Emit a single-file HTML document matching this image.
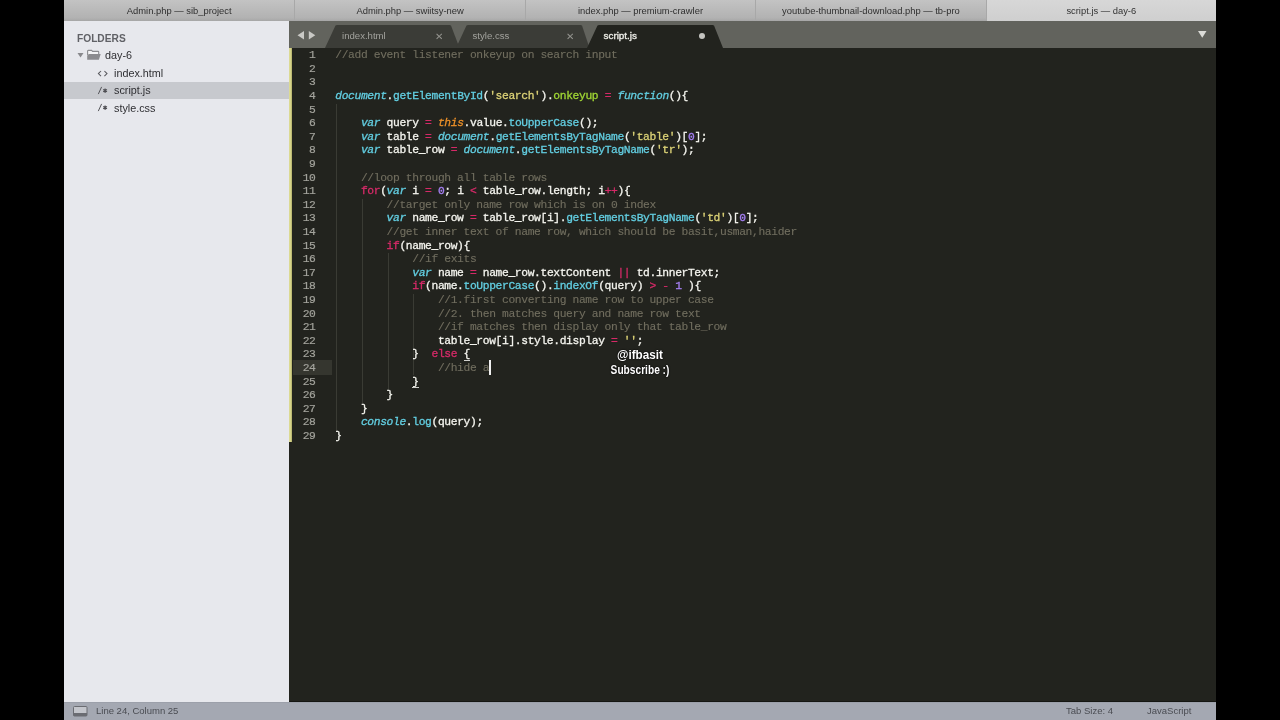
<!DOCTYPE html>
<html><head><meta charset="utf-8"><style>
*{margin:0;padding:0;box-sizing:border-box}
html,body{width:1280px;height:720px;overflow:hidden;background:#000}
body{position:relative;font-family:"Liberation Sans",sans-serif}
#wrap{position:absolute;left:0;top:0;width:1280px;height:720px;will-change:transform}
.abs{position:absolute}
#title{position:absolute;left:64px;top:0;width:1152px;height:21px;background:linear-gradient(#c3c3c3,#b2b2b2 85%,#a6a6a6)}
.tt{position:absolute;top:0;height:21px;line-height:21.4px;text-align:center;font-size:9.4px;color:#2f2f2f;border-left:1px solid #a8a8a8;white-space:pre}
.tt.first{border-left:none}
.tt.act{background:linear-gradient(#d7d7d7,#cfcfcf);color:#333}
#side{position:absolute;left:64px;top:21px;width:225px;height:681px;background:#e7e8ed}
#editor{position:absolute;left:289px;top:21px;width:927px;height:681px;background:#22231e;border-bottom:1px solid #151612}
#tabbar{position:absolute;left:289px;top:21px;width:927px;height:27px;background:#62635d}
#status{position:absolute;left:64px;top:702px;width:1152px;height:18px;background:#a4a8b2;border-top:1px solid #9ca0aa}
.ln{position:absolute;left:335.3px;height:13.6px;line-height:13.6px;font-family:"Liberation Mono",monospace;font-size:11.3px;letter-spacing:-0.368px;white-space:pre;color:#f8f8f2;-webkit-text-stroke:0.3px;z-index:3}
.num{position:absolute;left:291px;width:24.5px;text-align:right;height:13.6px;line-height:13.6px;font-family:"Liberation Mono",monospace;font-size:11.3px;letter-spacing:-0.368px;color:#a3a39c;-webkit-text-stroke:0.2px;z-index:3}
.guide{position:absolute;width:1px;background:#3a3b34;z-index:2}
.st{position:absolute;font-size:10.8px;color:#2f2f33;white-space:pre;line-height:12px}
.tabt{position:absolute;top:30px;font-size:9.6px;line-height:12px;color:#a2a29d;white-space:pre;z-index:5}
.x{position:absolute;top:31px;font-size:10px;line-height:12px;color:#94948f;z-index:5}
.sb{position:absolute;top:704.8px;font-size:9.5px;line-height:12px;color:#4a4c52;white-space:pre}
</style></head><body><div id="wrap">
<div id="title">
<div class="tt first" style="left:0.0px;width:230.4px">Admin.php — sib_project</div>
<div class="tt" style="left:230.4px;width:230.4px">Admin.php — swiitsy-new</div>
<div class="tt" style="left:460.8px;width:230.4px">index.php — premium-crawler</div>
<div class="tt" style="left:691.2px;width:230.4px">youtube-thumbnail-download.php — tb-pro</div>
<div class="tt act" style="left:921.6px;width:230.4px">script.js — day-6</div>
</div>
<div id="side"></div>
<div class="abs" style="left:64px;top:82px;width:225px;height:17px;background:#c7c9ce"></div>
<div class="st" style="left:77px;top:33.2px;font-weight:bold;font-size:10.2px;color:#606166">FOLDERS</div>
<svg class="abs" style="left:76.6px;top:51.6px" width="8" height="7" viewBox="0 0 8 7"><path d="M0.5 1 L6.5 1 L3.5 5.5 Z" fill="#88888c"/></svg>
<svg class="abs" style="left:86px;top:49px" width="16" height="12" viewBox="0 0 16 12"><path d="M1.6 6 L1.6 2.0 Q1.6 1.4 2.2 1.4 L5.6 1.4 L6.6 2.4 L12.1 2.4 Q12.7 2.4 12.7 3.0 L12.7 5.5" fill="#f3f3f5" stroke="#8c8c90" stroke-width="1.1"/><path d="M2.9 5.0 L14.7 5.0 L12.9 10.8 L1.2 10.8 L1.2 6.6 Z" fill="#8b8b8f"/></svg>
<div class="st" style="left:105px;top:48.8px">day-6</div>
<svg class="abs" style="left:97px;top:69.7px" width="12" height="8" viewBox="0 0 12 8"><path d="M4 1 L1.4 3.55 L4 6.1 M7.4 1 L10 3.55 L7.4 6.1" fill="none" stroke="#58585d" stroke-width="1.05"/></svg>
<div class="st" style="left:114px;top:66.6px">index.html</div>
<svg class="abs" style="left:97px;top:85.5px" width="12" height="10" viewBox="0 0 12 10"><path d="M1.3 8.1 L4.6 0.9" fill="none" stroke="#56565b" stroke-width="1"/><path d="M8.1 2.5 L8.1 6.9 M6.2 3.6 L10 5.8 M6.2 5.8 L10 3.6" fill="none" stroke="#4e4e53" stroke-width="1.1"/></svg>
<div class="st" style="left:114px;top:84px">script.js</div>
<svg class="abs" style="left:97px;top:102.9px" width="12" height="10" viewBox="0 0 12 10"><path d="M1.3 8.1 L4.6 0.9" fill="none" stroke="#56565b" stroke-width="1"/><path d="M8.1 2.5 L8.1 6.9 M6.2 3.6 L10 5.8 M6.2 5.8 L10 3.6" fill="none" stroke="#4e4e53" stroke-width="1.1"/></svg>
<div class="st" style="left:114px;top:101.5px">style.css</div>
<div id="editor"></div>
<div id="tabbar"></div>
<svg class="abs" style="left:296px;top:29.6px;z-index:5" width="22" height="11" viewBox="0 0 22 11"><path d="M1.5 5.2 L8 1 L8 9.5 Z" fill="#c9c9c5"/><path d="M12.8 1 L19.3 5.2 L12.8 9.5 Z" fill="#c9c9c5"/></svg>
<div class="abs" style="left:325px;top:25px;width:134.5px;height:23px;background:#3b3c37;clip-path:polygon(0px 23px, 10.5px 0.5px, 12px 0px, 124.5px 0px, 126.0px 0.5px, 134.5px 23px);z-index:3"></div>
<div class="abs" style="left:456px;top:25px;width:133.5px;height:23px;background:#3b3c37;clip-path:polygon(0px 23px, 10.5px 0.5px, 12px 0px, 124.5px 0px, 126.0px 0.5px, 133.5px 23px);z-index:3"></div>
<div class="abs" style="left:587px;top:25px;width:136px;height:23px;background:#22231e;clip-path:polygon(0px 23px, 10.5px 0.5px, 12px 0px, 125.5px 0px, 127.0px 0.5px, 136px 23px);z-index:4"></div>
<div class="tabt" style="left:342px">index.html</div>
<div class="x" style="left:435.4px">&#x2715;</div>
<div class="tabt" style="left:472.5px">style.css</div>
<div class="x" style="left:566px">&#x2715;</div>
<div class="tabt" style="left:603.5px;top:29.5px;color:#ececE6;font-size:9.9px;-webkit-text-stroke:0.35px #ececE6">script.js</div>
<div class="abs" style="left:699px;top:33.4px;width:6px;height:6px;border-radius:50%;background:#c4c4c0;z-index:5"></div>
<svg class="abs" style="left:1197px;top:30px;z-index:5" width="11" height="9" viewBox="0 0 11 9"><path d="M1 1 L9.5 1 L5.25 7.8 Z" fill="#dcdcd8"/></svg>
<div class="abs" style="left:288.5px;top:48px;width:3.5px;height:394px;background:linear-gradient(90deg,#dedc98,#d4d286 60%,#a9a866);z-index:3"></div>
<div class="abs" style="left:292.5px;top:360.2px;width:39.5px;height:14.6px;background:#35362f;z-index:1"></div>
<div class="guide" style="left:336.3px;top:103.5px;height:326.4px"></div>
<div class="guide" style="left:362.0px;top:198.7px;height:204.0px"></div>
<div class="guide" style="left:387.6px;top:253.1px;height:136.0px"></div>
<div class="guide" style="left:413.3px;top:293.9px;height:81.6px"></div>
<div class="ln" style="top:49.10px"><span style="color:#716e5f;-webkit-text-stroke-width:0.12px">//add event listener onkeyup on search input</span></div>
<div class="num" style="top:49.10px">1</div>
<div class="ln" style="top:62.70px"></div>
<div class="num" style="top:62.70px">2</div>
<div class="ln" style="top:76.30px"></div>
<div class="num" style="top:76.30px">3</div>
<div class="ln" style="top:89.90px"><span style="color:#62cde0;font-style:italic">document</span><span style="color:#f4f4ee">.</span><span style="color:#62cde0">getElementById</span><span style="color:#f4f4ee">(</span><span style="color:#dcd276">&#x27;search&#x27;</span><span style="color:#f4f4ee">)</span><span style="color:#f4f4ee">.</span><span style="color:#a0d634">onkeyup</span><span style="color:#f4f4ee"> </span><span style="color:#d62a68">=</span><span style="color:#f4f4ee"> </span><span style="color:#62cde0;font-style:italic">function</span><span style="color:#f4f4ee">(){</span></div>
<div class="num" style="top:89.90px">4</div>
<div class="ln" style="top:103.50px"></div>
<div class="num" style="top:103.50px">5</div>
<div class="ln" style="top:117.10px"><span style="color:#f4f4ee">    </span><span style="color:#62cde0;font-style:italic">var</span><span style="color:#f4f4ee"> query </span><span style="color:#d62a68">=</span><span style="color:#f4f4ee"> </span><span style="color:#ec9028;font-style:italic">this</span><span style="color:#f4f4ee">.value.</span><span style="color:#62cde0">toUpperCase</span><span style="color:#f4f4ee">();</span></div>
<div class="num" style="top:117.10px">6</div>
<div class="ln" style="top:130.70px"><span style="color:#f4f4ee">    </span><span style="color:#62cde0;font-style:italic">var</span><span style="color:#f4f4ee"> table </span><span style="color:#d62a68">=</span><span style="color:#f4f4ee"> </span><span style="color:#62cde0;font-style:italic">document</span><span style="color:#f4f4ee">.</span><span style="color:#62cde0">getElementsByTagName</span><span style="color:#f4f4ee">(</span><span style="color:#dcd276">&#x27;table&#x27;</span><span style="color:#f4f4ee">)[</span><span style="color:#a680f4">0</span><span style="color:#f4f4ee">];</span></div>
<div class="num" style="top:130.70px">7</div>
<div class="ln" style="top:144.30px"><span style="color:#f4f4ee">    </span><span style="color:#62cde0;font-style:italic">var</span><span style="color:#f4f4ee"> table_row </span><span style="color:#d62a68">=</span><span style="color:#f4f4ee"> </span><span style="color:#62cde0;font-style:italic">document</span><span style="color:#f4f4ee">.</span><span style="color:#62cde0">getElementsByTagName</span><span style="color:#f4f4ee">(</span><span style="color:#dcd276">&#x27;tr&#x27;</span><span style="color:#f4f4ee">);</span></div>
<div class="num" style="top:144.30px">8</div>
<div class="ln" style="top:157.90px"></div>
<div class="num" style="top:157.90px">9</div>
<div class="ln" style="top:171.50px"><span style="color:#f4f4ee">    </span><span style="color:#716e5f;-webkit-text-stroke-width:0.12px">//loop through all table rows</span></div>
<div class="num" style="top:171.50px">10</div>
<div class="ln" style="top:185.10px"><span style="color:#f4f4ee">    </span><span style="color:#d62a68">for</span><span style="color:#f4f4ee">(</span><span style="color:#62cde0;font-style:italic">var</span><span style="color:#f4f4ee"> i </span><span style="color:#d62a68">=</span><span style="color:#f4f4ee"> </span><span style="color:#a680f4">0</span><span style="color:#f4f4ee">; i </span><span style="color:#d62a68">&lt;</span><span style="color:#f4f4ee"> table_row.length; i</span><span style="color:#d62a68">++</span><span style="color:#f4f4ee">){</span></div>
<div class="num" style="top:185.10px">11</div>
<div class="ln" style="top:198.70px"><span style="color:#f4f4ee">        </span><span style="color:#716e5f;-webkit-text-stroke-width:0.12px">//target only name row which is on 0 index</span></div>
<div class="num" style="top:198.70px">12</div>
<div class="ln" style="top:212.30px"><span style="color:#f4f4ee">        </span><span style="color:#62cde0;font-style:italic">var</span><span style="color:#f4f4ee"> name_row </span><span style="color:#d62a68">=</span><span style="color:#f4f4ee"> table_row[i].</span><span style="color:#62cde0">getElementsByTagName</span><span style="color:#f4f4ee">(</span><span style="color:#dcd276">&#x27;td&#x27;</span><span style="color:#f4f4ee">)[</span><span style="color:#a680f4">0</span><span style="color:#f4f4ee">];</span></div>
<div class="num" style="top:212.30px">13</div>
<div class="ln" style="top:225.90px"><span style="color:#f4f4ee">        </span><span style="color:#716e5f;-webkit-text-stroke-width:0.12px">//get inner text of name row, which should be basit,usman,haider</span></div>
<div class="num" style="top:225.90px">14</div>
<div class="ln" style="top:239.50px"><span style="color:#f4f4ee">        </span><span style="color:#d62a68">if</span><span style="color:#f4f4ee">(name_row){</span></div>
<div class="num" style="top:239.50px">15</div>
<div class="ln" style="top:253.10px"><span style="color:#f4f4ee">            </span><span style="color:#716e5f;-webkit-text-stroke-width:0.12px">//if exits</span></div>
<div class="num" style="top:253.10px">16</div>
<div class="ln" style="top:266.70px"><span style="color:#f4f4ee">            </span><span style="color:#62cde0;font-style:italic">var</span><span style="color:#f4f4ee"> name </span><span style="color:#d62a68">=</span><span style="color:#f4f4ee"> name_row.textContent </span><span style="color:#d62a68">||</span><span style="color:#f4f4ee"> td.innerText;</span></div>
<div class="num" style="top:266.70px">17</div>
<div class="ln" style="top:280.30px"><span style="color:#f4f4ee">            </span><span style="color:#d62a68">if</span><span style="color:#f4f4ee">(name.</span><span style="color:#62cde0">toUpperCase</span><span style="color:#f4f4ee">().</span><span style="color:#62cde0">indexOf</span><span style="color:#f4f4ee">(query) </span><span style="color:#d62a68">&gt;</span><span style="color:#f4f4ee"> </span><span style="color:#d62a68">-</span><span style="color:#f4f4ee"> </span><span style="color:#a680f4">1</span><span style="color:#f4f4ee"> ){</span></div>
<div class="num" style="top:280.30px">18</div>
<div class="ln" style="top:293.90px"><span style="color:#f4f4ee">                </span><span style="color:#716e5f;-webkit-text-stroke-width:0.12px">//1.first converting name row to upper case</span></div>
<div class="num" style="top:293.90px">19</div>
<div class="ln" style="top:307.50px"><span style="color:#f4f4ee">                </span><span style="color:#716e5f;-webkit-text-stroke-width:0.12px">//2. then matches query and name row text</span></div>
<div class="num" style="top:307.50px">20</div>
<div class="ln" style="top:321.10px"><span style="color:#f4f4ee">                </span><span style="color:#716e5f;-webkit-text-stroke-width:0.12px">//if matches then display only that table_row</span></div>
<div class="num" style="top:321.10px">21</div>
<div class="ln" style="top:334.70px"><span style="color:#f4f4ee">                table_row[i].style.display </span><span style="color:#d62a68">=</span><span style="color:#f4f4ee"> </span><span style="color:#dcd276">&#x27;&#x27;</span><span style="color:#f4f4ee">;</span></div>
<div class="num" style="top:334.70px">22</div>
<div class="ln" style="top:348.30px"><span style="color:#f4f4ee">            }  </span><span style="color:#d62a68">else</span><span style="color:#f4f4ee"> {</span></div>
<div class="num" style="top:348.30px">23</div>
<div class="ln" style="top:361.90px"><span style="color:#f4f4ee">                </span><span style="color:#716e5f;-webkit-text-stroke-width:0.12px">//hide a</span></div>
<div class="num" style="top:361.90px">24</div>
<div class="ln" style="top:375.50px"><span style="color:#f4f4ee">            }</span></div>
<div class="num" style="top:375.50px">25</div>
<div class="ln" style="top:389.10px"><span style="color:#f4f4ee">        }</span></div>
<div class="num" style="top:389.10px">26</div>
<div class="ln" style="top:402.70px"><span style="color:#f4f4ee">    }</span></div>
<div class="num" style="top:402.70px">27</div>
<div class="ln" style="top:416.30px"><span style="color:#f4f4ee">    </span><span style="color:#62cde0;font-style:italic">console</span><span style="color:#f4f4ee">.</span><span style="color:#62cde0">log</span><span style="color:#f4f4ee">(query);</span></div>
<div class="num" style="top:416.30px">28</div>
<div class="ln" style="top:429.90px"><span style="color:#f4f4ee">}</span></div>
<div class="num" style="top:429.90px">29</div>
<div class="abs" style="left:489px;top:360px;width:1.6px;height:15px;background:#f0f0f0;z-index:4"></div>
<div class="abs" style="left:463.6px;top:360.2px;width:6.4px;height:1px;background:#d0d0cc;z-index:4"></div>
<div class="abs" style="left:412.3px;top:387.4px;width:6.4px;height:1px;background:#d0d0cc;z-index:4"></div>
<div class="abs" style="left:540px;top:347.5px;width:200px;text-align:center;font-size:13.3px;line-height:14px;font-weight:bold;color:#fff;z-index:6;transform:scaleX(0.88);text-shadow:0 0 2px #000,0 0 1px #000">@ifbasit</div>
<div class="abs" style="left:540px;top:362.8px;width:200px;text-align:center;font-size:13.3px;line-height:14px;font-weight:bold;color:#fff;z-index:6;transform:scaleX(0.765);text-shadow:0 0 2px #000,0 0 1px #000">Subscribe :)</div>
<div id="status"></div>
<svg class="abs" style="left:73px;top:706px" width="15" height="11" viewBox="0 0 15 11"><rect x="0.5" y="0.5" width="13.5" height="9.5" rx="1" fill="#c3c5cb" stroke="#6a6c72" stroke-width="1"/><rect x="0.5" y="7" width="13.5" height="3" fill="#6a6c72"/></svg>
<div class="sb" style="left:96px">Line 24, Column 25</div>
<div class="sb" style="left:1066px">Tab Size: 4</div>
<div class="sb" style="left:1147px">JavaScript</div>
</div></body></html>
